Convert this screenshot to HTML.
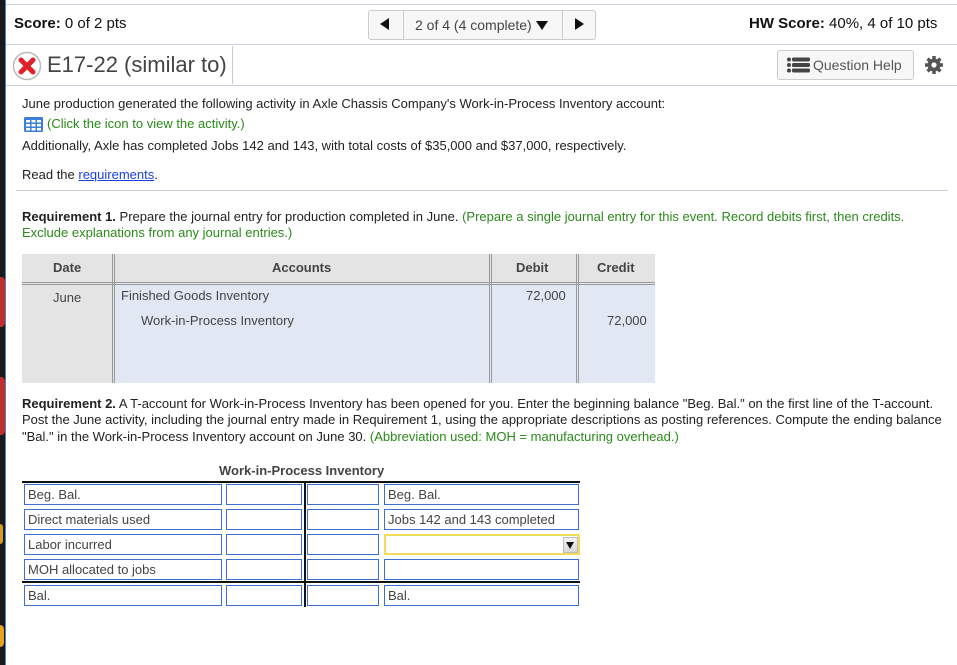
<!DOCTYPE html>
<html><head><style>
*{margin:0;padding:0;box-sizing:border-box}
body{width:957px;height:665px;background:#fff;font-family:"Liberation Sans",Arial,sans-serif;position:relative;overflow:hidden;color:#222}
.a{position:absolute;white-space:nowrap}
.hl{position:absolute;height:1px;background:#c8cfe0}
.t12{font-size:13px}
.g{color:#2a8a1a}
.box{position:absolute;border:1px solid #3d6fcf;height:21px;font-size:13px;color:#444;padding:2px 0 0 3px;background:#fff}
</style></head><body>
<div class="a" style="left:0;top:0;width:5px;height:665px;background:#1a1a1a"></div>
<div class="a" style="left:5px;top:0;width:1px;height:665px;background:#4a7fd0"></div>
<div class="a" style="left:0;top:277px;width:5px;height:50px;background:#c0302a;border-radius:0 4px 4px 0"></div>
<div class="a" style="left:0;top:377px;width:5px;height:58px;background:#c0302a;border-radius:0 4px 4px 0"></div>
<div class="a" style="left:0;top:524px;width:3px;height:20px;background:#d89a20;border-radius:0 4px 4px 0"></div>
<div class="a" style="left:0;top:625px;width:4px;height:22px;background:#e8a020;border-radius:0 6px 6px 0"></div>

<div class="hl" style="left:6px;top:4px;width:951px"></div>
<div class="a" style="left:14px;top:15px;font-size:15px;color:#111"><b>Score:</b> 0 of 2 pts</div>
<div class="a" style="left:368px;top:10px;width:228px;height:30px;border:1px solid #ccc;border-radius:3px;background:#f7f7f7"></div>
<div class="a" style="left:403px;top:10px;width:1px;height:30px;background:#ccc"></div>
<div class="a" style="left:562px;top:10px;width:1px;height:30px;background:#ccc"></div>
<div class="a" style="left:380px;top:18px;width:0;height:0;border-top:6px solid transparent;border-bottom:6px solid transparent;border-right:9px solid #111"></div>
<div class="a" style="left:415px;top:17px;font-size:14px;color:#444">2 of 4 (4 complete)</div>
<div class="a" style="left:536px;top:21px;width:0;height:0;border-left:6px solid transparent;border-right:6px solid transparent;border-top:9px solid #111"></div>
<div class="a" style="left:575px;top:18px;width:0;height:0;border-top:6px solid transparent;border-bottom:6px solid transparent;border-left:9px solid #111"></div>
<div class="a" style="left:749px;top:15px;font-size:15px;color:#111"><b>HW Score:</b> 40%, 4 of 10 pts</div>
<div class="hl" style="left:6px;top:44px;width:951px"></div>

<svg class="a" style="left:12px;top:51px" width="30" height="30" viewBox="0 0 30 30"><circle cx="15" cy="15" r="13.5" fill="#fff" stroke="#bbb" stroke-width="1.5"/><path d="M9 9L21 21M21 9L9 21" stroke="#e0212a" stroke-width="5" stroke-linecap="round"/></svg>
<div class="a" style="left:47px;top:52px;font-size:22px;color:#444">E17-22 (similar to)</div>
<div class="a" style="left:232px;top:46px;width:1px;height:38px;background:#ccc"></div>
<div class="a" style="left:777px;top:50px;width:137px;height:30px;border:1px solid #ccc;border-radius:3px;background:#f7f7f7"></div>
<svg class="a" style="left:787px;top:57px" width="23" height="16" viewBox="0 0 23 16"><g fill="#444"><circle cx="2" cy="2.5" r="2"/><rect x="5" y="0.5" width="18" height="4" rx="1.5"/><circle cx="2" cy="8" r="2"/><rect x="5" y="6" width="18" height="4" rx="1.5"/><circle cx="2" cy="13.5" r="2"/><rect x="5" y="11.5" width="18" height="4" rx="1.5"/></g></svg>
<div class="a" style="left:813px;top:57px;font-size:14px;color:#555">Question Help</div>
<svg class="a" style="left:924px;top:55px" width="20" height="20" viewBox="0 0 20 20"><g fill="#555"><circle cx="10" cy="10" r="6.5"/><g stroke="#555" stroke-width="3.5"><path d="M10 1v18M1 10h18M3.6 3.6l12.8 12.8M16.4 3.6L3.6 16.4"/></g></g><circle cx="10" cy="10" r="2.6" fill="#fff"/></svg>
<div class="hl" style="left:6px;top:85px;width:951px"></div>

<div class="a t12" style="left:22px;top:96px">June production generated the following activity in Axle Chassis Company's Work-in-Process Inventory account:</div>
<svg class="a" style="left:24px;top:117px" width="19" height="15" viewBox="0 0 19 15"><rect width="19" height="15" rx="1.5" fill="#3b7fd6"/><g fill="#fff"><rect x="2" y="3" width="4" height="2.5"/><rect x="7.5" y="3" width="4" height="2.5"/><rect x="13" y="3" width="4" height="2.5"/><rect x="2" y="7" width="4" height="2.5"/><rect x="7.5" y="7" width="4" height="2.5"/><rect x="13" y="7" width="4" height="2.5"/><rect x="2" y="11" width="4" height="2.5"/><rect x="7.5" y="11" width="4" height="2.5"/><rect x="13" y="11" width="4" height="2.5"/></g></svg>
<div class="a t12 g" style="left:47px;top:116px">(Click the icon to view the activity.)</div>
<div class="a t12" style="left:22px;top:138px">Additionally, Axle has completed Jobs 142 and 143, with total costs of $35,000 and $37,000, respectively.</div>
<div class="a t12" style="left:22px;top:167px">Read the <span style="color:#1a3fe0;text-decoration:underline">requirements</span>.</div>
<div class="hl" style="left:16px;top:190px;width:932px"></div>

<div class="a t12" style="left:22px;top:209px"><b>Requirement 1.</b> Prepare the journal entry for production completed in June. <span class="g">(Prepare a single journal entry for this event. Record debits first, then credits.</span></div>
<div class="a t12 g" style="left:22px;top:225px">Exclude explanations from any journal entries.)</div>

<div class="a" style="left:22px;top:254px;width:633px;height:129px;background:#e4e4e4"></div>
<div class="a" style="left:114px;top:283px;width:541px;height:100px;background:#e1e8f3"></div>
<div class="a" style="left:22px;top:282px;width:633px;height:3px;border-top:1px solid #999;border-bottom:1px solid #999"></div>
<div class="a" style="left:112px;top:254px;width:3px;height:129px;border-left:1px solid #999;border-right:1px solid #999"></div>
<div class="a" style="left:489px;top:254px;width:3px;height:129px;border-left:1px solid #999;border-right:1px solid #999"></div>
<div class="a" style="left:576px;top:254px;width:3px;height:129px;border-left:1px solid #999;border-right:1px solid #999"></div>
<div class="a t12" style="left:53px;top:260px;font-weight:bold;color:#444">Date</div>
<div class="a t12" style="left:272px;top:260px;font-weight:bold;color:#444">Accounts</div>
<div class="a t12" style="left:516px;top:260px;font-weight:bold;color:#444">Debit</div>
<div class="a t12" style="left:597px;top:260px;font-weight:bold;color:#444">Credit</div>
<div class="a t12" style="left:53px;top:290px;color:#444">June</div>
<div class="a t12" style="left:121px;top:288px;color:#444">Finished Goods Inventory</div>
<div class="a t12" style="left:526px;top:288px;color:#444">72,000</div>
<div class="a t12" style="left:141px;top:313px;color:#444">Work-in-Process Inventory</div>
<div class="a t12" style="left:607px;top:313px;color:#444">72,000</div>

<div class="a t12" style="left:22px;top:396px"><b>Requirement 2.</b> A T-account for Work-in-Process Inventory has been opened for you. Enter the beginning balance "Beg. Bal." on the first line of the T-account.</div>
<div class="a t12" style="left:22px;top:412px">Post the June activity, including the journal entry made in Requirement 1, using the appropriate descriptions as posting references. Compute the ending balance</div>
<div class="a t12" style="left:22px;top:429px">"Bal." in the Work-in-Process Inventory account on June 30. <span class="g">(Abbreviation used: MOH = manufacturing overhead.)</span></div>

<div class="a t12" style="left:219px;top:463px;font-weight:bold;color:#444">Work-in-Process Inventory</div>
<div class="a" style="left:22px;top:481px;width:558px;height:2px;background:#111"></div>
<div class="a" style="left:22px;top:581px;width:558px;height:2px;background:#111"></div>
<div class="a" style="left:304px;top:481px;width:2px;height:126px;background:#111"></div>

<div class="box" style="left:24px;top:484px;width:198px">Beg. Bal.</div>
<div class="box" style="left:226px;top:484px;width:76px"></div>
<div class="box" style="left:307px;top:484px;width:72px"></div>
<div class="box" style="left:384px;top:484px;width:195px">Beg. Bal.</div>

<div class="box" style="left:24px;top:509px;width:198px">Direct materials used</div>
<div class="box" style="left:226px;top:509px;width:76px"></div>
<div class="box" style="left:307px;top:509px;width:72px"></div>
<div class="box" style="left:384px;top:509px;width:195px">Jobs 142 and 143 completed</div>

<div class="box" style="left:24px;top:534px;width:198px">Labor incurred</div>
<div class="box" style="left:226px;top:534px;width:76px"></div>
<div class="box" style="left:307px;top:534px;width:72px"></div>
<div class="box" style="left:384px;top:534px;width:196px;border:2px solid #f2dc5a"></div>
<div class="a" style="left:563px;top:537px;width:15px;height:16px;background:linear-gradient(#f4f4f4,#d8d8d8);border:1px solid #bbb"></div>
<div class="a" style="left:566px;top:542px;width:0;height:0;border-left:4px solid transparent;border-right:4px solid transparent;border-top:7px solid #111"></div>

<div class="box" style="left:24px;top:559px;width:198px">MOH allocated to jobs</div>
<div class="box" style="left:226px;top:559px;width:76px"></div>
<div class="box" style="left:307px;top:559px;width:72px"></div>
<div class="box" style="left:384px;top:559px;width:195px"></div>

<div class="box" style="left:24px;top:585px;width:198px">Bal.</div>
<div class="box" style="left:226px;top:585px;width:76px"></div>
<div class="box" style="left:307px;top:585px;width:72px"></div>
<div class="box" style="left:384px;top:585px;width:195px">Bal.</div>
</body></html>
